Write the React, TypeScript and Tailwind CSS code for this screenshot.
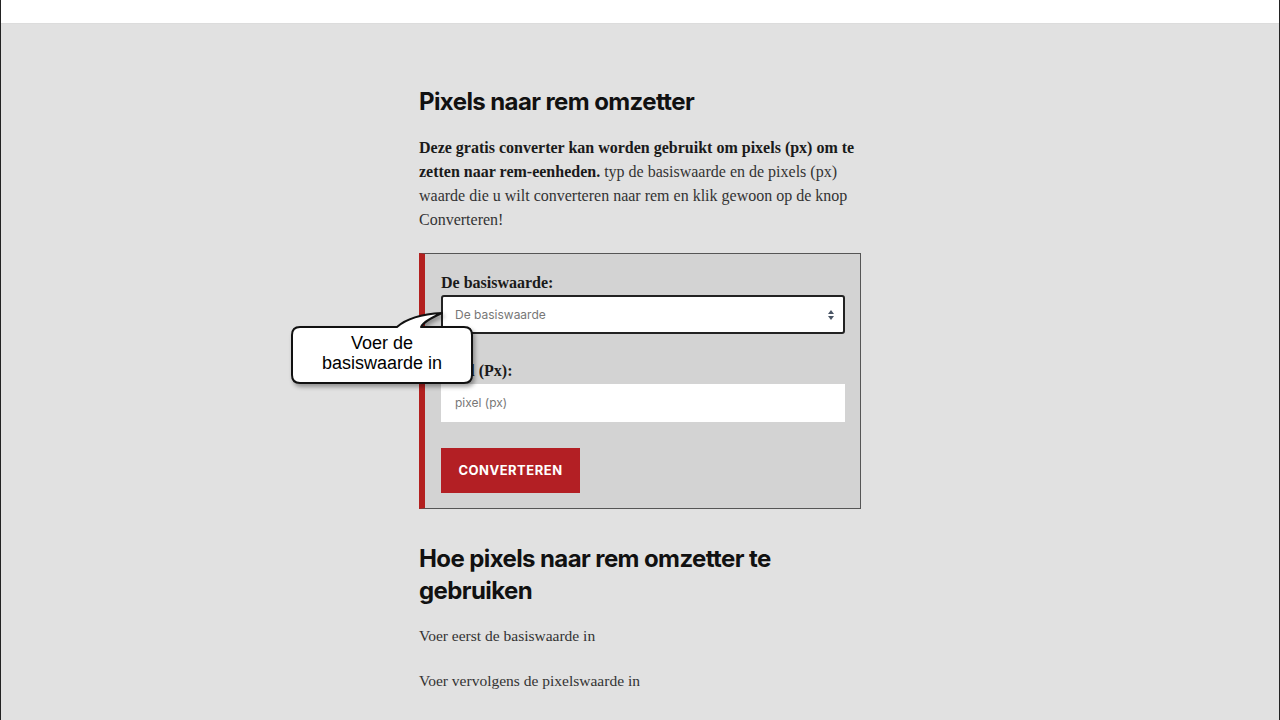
import React from "react";

// ── Speech-bubble annotation over the form ─────────────────────────────────
function Callout() {
  return (
    <div className="absolute left-[-135px] top-[55px] w-[186px] h-[82px] pointer-events-none">
      <svg
        width="186"
        height="82"
        viewBox="0 0 186 82"
        className="absolute inset-0 drop-shadow-[2px_3px_2px_rgba(0,0,0,0.35)]"
      >
        <path
          d="M10 18 L107 18 C118 8 134 5 152 4 C141 9 133 13 131 18 L174 18 Q182 18 182 26 L182 66 Q182 74 174 74 L10 74 Q2 74 2 66 L2 26 Q2 18 10 18 Z"
          fill="#ffffff"
          stroke="#111111"
          strokeWidth="2"
          strokeLinejoin="round"
        />
      </svg>
      <div className="absolute left-[2px] top-[16px] w-[180px] h-[56px] flex items-center justify-center text-center font-['Liberation_Sans',Arial,sans-serif] text-[18px] leading-[20px] text-black">
        Voer de
        <br />
        basiswaarde in
      </div>
    </div>
  );
}

function UpDown() {
  return (
    <svg width="8" height="12" viewBox="0 0 8 12" className="text-gray-600">
      <path d="M4 1 L7 5 L1 5 Z" fill="currentColor" />
      <path d="M4 11 L7 7 L1 7 Z" fill="currentColor" />
    </svg>
  );
}

export default function App() {
  const serif = "font-['Liberation_Serif','Times_New_Roman',serif]";
  const sans = "font-['Inter','Liberation_Sans',sans-serif]";

  return (
    <div className="min-h-[720px] bg-[#e1e1e1] border-x border-[#222] overflow-hidden">
      {/* top white strip */}
      <div className="h-6 bg-white border-b border-[#dcdcdc]" />

      <main className="w-[442px] mx-auto pt-[62px] pb-10">
        <h1 className={`${sans} text-[24px] leading-8 font-bold tracking-[-0.6px] text-[#111]`}>
          Pixels naar rem omzetter
        </h1>

        <p className={`${serif} mt-[18px] text-[16px] leading-6 text-[#333]`}>
          <strong className="text-[#1a1a1a]">
            Deze gratis converter kan worden gebruikt om pixels (px) om te zetten naar rem-eenheden.
          </strong>{" "}
          typ de basiswaarde en de pixels (px) waarde die u wilt converteren naar rem en klik gewoon op de knop
          Converteren!
        </p>

        {/* converter form */}
        <div className="relative mt-[21px] bg-[#d3d3d3] border border-[#555] border-l-[6px] border-l-[#b3201f] pt-[19px] pr-[15px] pb-[15px] pl-4">
          <label className={`${serif} block text-[16px] leading-5 font-bold text-[#1a1a1a]`}>
            De basiswaarde:
          </label>
          <div className="mt-[2px] h-[39px] bg-white border-2 border-[#222] rounded-[3px] flex items-center justify-between pl-3 pr-2">
            <span className={`${sans} text-[12px] text-[#777]`}>De basiswaarde</span>
            <UpDown />
          </div>

          <label className={`${serif} block mt-[27px] text-[16px] leading-5 font-bold text-[#1a1a1a]`}>
            Pixel (Px):
          </label>
          <div className="mt-[3px] h-[38px] bg-white flex items-center pl-[14px]">
            <span className={`${sans} text-[12px] text-[#777]`}>pixel (px)</span>
          </div>

          <button
            className={`${sans} mt-[26px] w-[139px] h-[45px] bg-[#b31f24] text-white text-[13px] font-bold tracking-[0.5px] uppercase`}
          >
            Converteren
          </button>

          <Callout />
        </div>

        <h2 className={`${sans} mt-[34px] text-[24px] leading-8 font-bold tracking-[-0.6px] text-[#111]`}>
          Hoe pixels naar rem omzetter te gebruiken
        </h2>

        <div className={`${serif} mt-[17px] text-[15.5px] leading-6 text-[#333] flex flex-col gap-[21px]`}>
          <p>Voer eerst de basiswaarde in</p>
          <p>Voer vervolgens de pixelswaarde in</p>
          <p>Klik ten slotte op de knop Converteren</p>
        </div>
      </main>
    </div>
  );
}
